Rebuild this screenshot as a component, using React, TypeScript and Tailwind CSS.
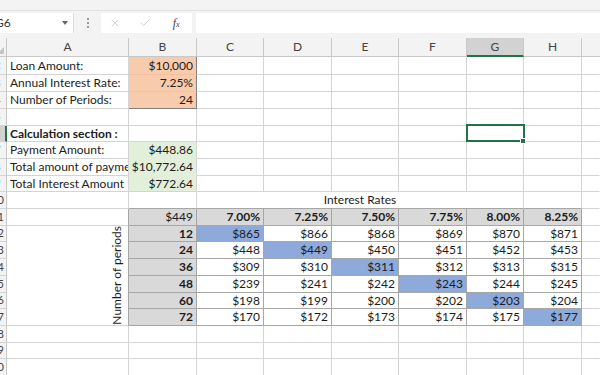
import React from 'react';
import { X, Check } from 'lucide-react';

type CellProps = {
  children?: React.ReactNode;
  className?: string;
  b?: string;
};

// one spreadsheet cell, gridline on the right and bottom edge
const C: React.FC<CellProps> = ({ children, className = '', b = 'border-[#d4d4d4]' }) => (
  <div className={`flex items-center overflow-hidden whitespace-nowrap border-r border-b px-[3px] ${b} ${className}`}>
    {children}
  </div>
);

const RowHead: React.FC<{ n: number; active?: boolean }> = ({ n, active }) => (
  <div
    className={`flex items-center justify-center overflow-hidden border-b border-[#d4d4d4] text-[11px] text-[#444] ${
      active ? 'bg-[#d2d2d2] border-r-2 border-r-[#217346]' : 'bg-[#f3f3f3] border-r border-r-[#c8c8c8]'
    }`}
  >
    {n}
  </div>
);

const rates = ['7.00%', '7.25%', '7.50%', '7.75%', '8.00%', '8.25%'];
const table: [number, number[]][] = [
  [12, [865, 866, 868, 869, 870, 871]],
  [24, [448, 449, 450, 451, 452, 453]],
  [36, [309, 310, 311, 312, 313, 315]],
  [48, [239, 241, 242, 243, 244, 245]],
  [60, [198, 199, 200, 202, 203, 204]],
  [72, [170, 172, 173, 174, 175, 177]],
];

const blanks = (count: number, from: string) =>
  Array.from({ length: count }, (_, i) => <C key={`${from}-${i}`} />);

const Tail = ({ k }: { k: string }) => <C key={k} b="border-[#d4d4d4] border-r-transparent" />;

export default function App() {
  const cols = ['A', 'B', 'C', 'D', 'E', 'F', 'G', 'H'];

  return (
    <div className="w-[600px] h-[375px] overflow-hidden bg-white font-['Lato','Liberation_Sans',sans-serif] text-[12px] text-[#1c1c1c]">
      {/* ribbon edge */}
      <div className="h-[11px] bg-[#f3f3f3] border-b border-[#e2e2e2]" />

      {/* formula bar */}
      <div className="h-[27px] bg-[#f3f3f3] flex items-start pt-[2px]">
        <div className="w-[79px] h-[20px] bg-white border-r border-[#dcdcdc] flex items-center justify-between pr-[5px] -ml-[5px]">
          <span className="text-[12px] text-[#333]">G6</span>
          <svg width="6" height="4" viewBox="0 0 6 4">
            <path d="M0 0 L6 0 L3 4 Z" fill="#666" />
          </svg>
        </div>
        <div className="w-[27px] h-[20px] flex flex-col items-center justify-center gap-[2px]">
          <span className="w-[2px] h-[2px] bg-[#9a9a9a]" />
          <span className="w-[2px] h-[2px] bg-[#9a9a9a]" />
          <span className="w-[2px] h-[2px] bg-[#9a9a9a]" />
        </div>
        <div className="w-[91px] h-[20px] bg-white flex items-center">
          <div className="w-[28px] flex justify-center">
            <X size={12} strokeWidth={1.2} color="#b5b5b5" />
          </div>
          <div className="w-[32px] flex justify-center">
            <Check size={12} strokeWidth={1.5} color="#c2c2c2" />
          </div>
          <div className="w-[32px] flex justify-center">
            <span className="font-['Liberation_Serif',serif] italic text-[12px] text-[#444] leading-none">
              f<span className="text-[8px]">x</span>
            </span>
          </div>
        </div>
        <div className="ml-[4px] flex-1 h-[20px] bg-white" />
      </div>

      {/* sheet */}
      <div className="-ml-[11px] w-[611px] grid grid-cols-[18px_122px_68px_67px_68px_67px_68px_57px_58px_1fr] grid-rows-[19px_18px_17px_17px_17px_16px_17px_17px_16px_17px_17px_16px_17px_17px_17px_16px_17px_17px_16px_17px]">
        {/* column headers */}
        <div className="bg-[#f3f3f3] border-r border-b border-[#c8c8c8] flex items-end justify-end p-[2px]">
          <svg width="7" height="7" viewBox="0 0 7 7">
            <path d="M7 0 L7 7 L0 7 Z" fill="#c4c4c4" />
          </svg>
        </div>
        {cols.map((c) => (
          <div
            key={c}
            className={`flex items-center justify-center text-[12px] text-[#444] border-r border-r-[#c8c8c8] ${
              c === 'G' ? 'bg-[#d2d2d2] border-b-2 border-b-[#217346]' : 'bg-[#f3f3f3] border-b border-b-[#c8c8c8]'
            }`}
          >
            {c}
          </div>
        ))}
        <div className="bg-[#f3f3f3] border-b border-[#c8c8c8]" />

        {/* row 2 */}
        <RowHead n={2} />
        <C>Loan Amount:</C>
        <C className="bg-[#f8cbad] justify-end" b="border-b-[#f3c0a0] border-r-[#7f7f7f]">$10,000</C>
        {blanks(6, 'r2')}
        <Tail k="r2t" />

        {/* row 3 */}
        <RowHead n={3} />
        <C>Annual Interest Rate:</C>
        <C className="bg-[#f8cbad] justify-end" b="border-b-[#f3c0a0] border-r-[#7f7f7f]">7.25%</C>
        {blanks(6, 'r3')}
        <Tail k="r3t" />

        {/* row 4 */}
        <RowHead n={4} />
        <C>Number of Periods:</C>
        <C className="bg-[#f8cbad] justify-end" b="border-[#7f7f7f]">24</C>
        {blanks(6, 'r4')}
        <Tail k="r4t" />

        {/* row 5 */}
        <RowHead n={5} />
        {blanks(8, 'r5')}
        <Tail k="r5t" />

        {/* row 6 */}
        <RowHead n={6} active />
        <C className="font-bold">Calculation section :</C>
        {blanks(5, 'r6')}
        <div className="relative border-r border-b border-[#d4d4d4]">
          <div className="absolute -left-[1px] -top-[2px] w-[59px] h-[18px] border-2 border-[#217346]" />
          <div className="absolute -right-[3px] -bottom-[3px] w-[6px] h-[6px] bg-[#217346] border border-white" />
        </div>
        <C />
        <Tail k="r6t" />

        {/* rows 7-9 */}
        <RowHead n={7} />
        <C>Payment Amount:</C>
        <C className="bg-[#e2efda] justify-end" b="border-b-[#e2efda] border-r-[#d4d4d4]">$448.86</C>
        {blanks(6, 'r7')}
        <Tail k="r7t" />

        <RowHead n={8} />
        <C>Total amount of payments</C>
        <C className="bg-[#e2efda] justify-end" b="border-b-[#e2efda] border-r-[#d4d4d4]">$10,772.64</C>
        {blanks(6, 'r8')}
        <Tail k="r8t" />

        <RowHead n={9} />
        <C>Total Interest Amount</C>
        <C className="bg-[#e2efda] justify-end" b="border-[#d4d4d4]">$772.64</C>
        {blanks(6, 'r9')}
        <Tail k="r9t" />

        {/* row 10 */}
        <RowHead n={10} />
        <C />
        <C b="border-r-[#d4d4d4] border-b-[#a6a6a6]" />
        <C className="col-span-5 justify-center" b="border-r-[#d4d4d4] border-b-[#a6a6a6]">Interest Rates</C>
        <C b="border-r-[#d4d4d4] border-b-[#a6a6a6]" />
        <Tail k="r10t" />

        {/* row 11 */}
        <RowHead n={11} />
        <C b="border-r-[#a6a6a6] border-b-[#d4d4d4]" />
        <C className="bg-[#d9d9d9] justify-end" b="border-[#a6a6a6]">$449</C>
        {rates.map((r) => (
          <C key={r} className="bg-[#d9d9d9] justify-end font-bold" b="border-[#a6a6a6]">
            {r}
          </C>
        ))}
        <Tail k="r11t" />

        {/* rows 12-17 */}
        {table.map(([n, vals], i) => (
          <React.Fragment key={n}>
            <RowHead n={12 + i} />
            {i === 0 && (
              <C className="row-span-6 justify-end items-center pr-[2px]" b="border-r-[#a6a6a6] border-b-[#d4d4d4]">
                <span className="[writing-mode:vertical-rl] rotate-180">Number of periods</span>
              </C>
            )}
            <C className="bg-[#d9d9d9] justify-end font-bold" b="border-[#a6a6a6]">
              {n}
            </C>
            {vals.map((v, j) => (
              <C key={j} className={`justify-end ${i === j ? 'bg-[#8eaadb]' : ''}`} b="border-[#a6a6a6]">
                ${v}
              </C>
            ))}
            <Tail k={`r${12 + i}t`} />
          </React.Fragment>
        ))}

        {/* rows 18-20 */}
        {[18, 19, 20].map((n) => (
          <React.Fragment key={n}>
            <RowHead n={n} />
            {blanks(8, `r${n}`)}
            <Tail k={`r${n}t`} />
          </React.Fragment>
        ))}
      </div>
    </div>
  );
}
